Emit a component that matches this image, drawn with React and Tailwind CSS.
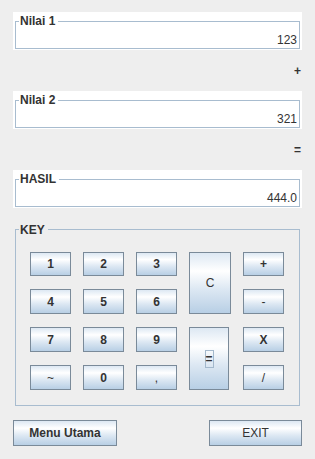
import React from 'react';

const btnBg =
  'bg-[linear-gradient(to_bottom,#dde8f3_0%,#ffffff_30%,#dde8f3_60%,#b8cfe5_100%)] border border-[#7a8a99] text-[#333333] text-[12px] flex items-center justify-center';

function Field({ title, value }) {
  return (
    <div className="mx-[13px] h-[38px] bg-white pt-[9px] pl-[2px] pr-[2px] pb-[1px]">
      <div className="relative h-full border border-[#a8bccf] flex items-end justify-end pr-[2px] pb-[1px]">
        <span className="absolute left-[3px] top-[-8px] bg-white pl-[1px] pr-[3px] text-[12px] leading-[14px] font-bold text-[#333333]">
          {title}
        </span>
        <span className="text-[12px] leading-[13px] text-[#333333]">{value}</span>
      </div>
    </div>
  );
}

function Key({ label, bold = true, className = '' }) {
  return (
    <button className={`${btnBg} ${bold ? 'font-bold' : 'font-normal'} ${className}`}>
      {label}
    </button>
  );
}

export default function App() {
  return (
    <div className="w-[315px] h-[459px] overflow-hidden bg-[#eeeeee] pt-[12px] font-['Liberation_Sans',Arial,sans-serif]">
      <Field title="Nilai 1" value="123" />
      <div className="h-[41px] flex items-center justify-end pr-[14px] text-[12px] font-bold text-[#333333]">+</div>
      <Field title="Nilai 2" value="321" />
      <div className="h-[41px] flex items-center justify-end pr-[14px] text-[12px] font-bold text-[#333333]">=</div>
      <Field title="HASIL" value="444.0" />

      {/* KEY */}
      <div className="relative mx-[15px] mt-[21px] h-[177px] border border-[#a8bccf] pt-[22px] px-[14px]">
        <span className="absolute left-[3px] top-[-7px] bg-[#eeeeee] pl-[1px] pr-[3px] text-[12px] leading-[14px] font-bold text-[#333333]">
          KEY
        </span>
        <div className="grid grid-cols-[41px_41px_41px_42px_41px] grid-rows-[24px_25px_25px_25px] gap-x-[12px] gap-y-[13px]">
          <Key label="1" />
          <Key label="2" />
          <Key label="3" />
          <Key label="C" bold={false} className="row-span-2" />
          <Key label="+" />
          <Key label="4" />
          <Key label="5" />
          <Key label="6" />
          <Key label="-" bold={false} />
          <Key label="7" />
          <Key label="8" />
          <Key label="9" />
          <button className={`${btnBg} font-bold row-span-2 w-[40px]`}>
            <span className="w-[9px] h-[18px] border border-[#a3b8cc] flex items-center justify-center leading-[14px]">=</span>
          </button>
          <Key label="X" />
          <Key label="~" bold={false} />
          <Key label="0" />
          <Key label="," bold={false} />
          <Key label="/" bold={false} />
        </div>
      </div>

      <div className="mt-[14px] mx-[13px] flex justify-between">
        <button className={`${btnBg} font-bold w-[104px] h-[26px]`}>Menu Utama</button>
        <button className={`${btnBg} font-normal w-[93px] h-[26px]`}>EXIT</button>
      </div>
    </div>
  );
}
